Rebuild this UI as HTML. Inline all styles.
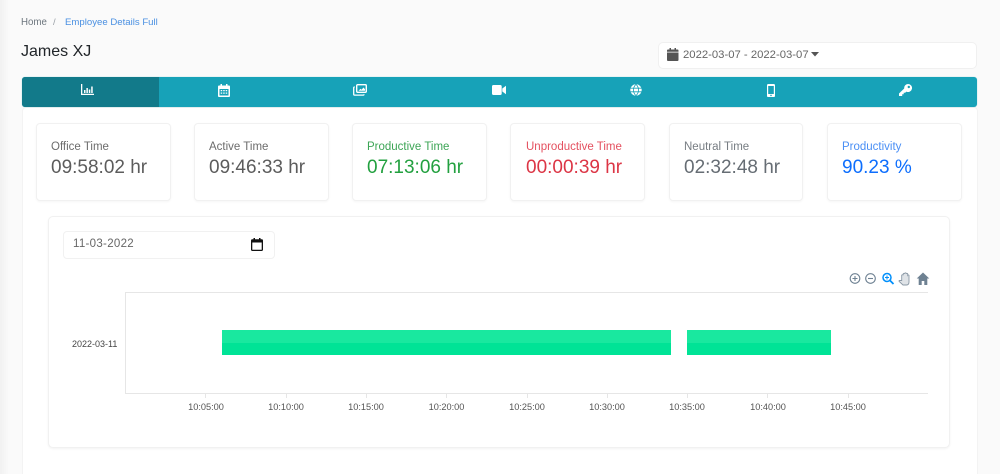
<!DOCTYPE html>
<html><head><meta charset="utf-8"><title>Employee Details</title>
<style>
*{box-sizing:border-box}
html,body{margin:0;padding:0;width:1000px;height:474px;overflow:hidden}
body{background:#fafafa;font-family:"Liberation Sans",sans-serif}
#page{position:relative;width:1000px;height:474px;overflow:hidden;background:#fafafa}
.a{position:absolute;white-space:nowrap}
#shade{left:0;top:0;width:9px;height:474px;background:linear-gradient(90deg,#f1f1f1,#fafafa)}
#panel{left:22px;top:107px;width:956px;height:367px;background:#fff;border:1px solid #f3f3f3;border-bottom:0;border-radius:4px 4px 0 0}
#nav{left:22px;top:77px;width:955px;height:30px;background:#17a2b8;border-radius:3px;overflow:hidden;box-shadow:0 0 1px #8ccfda}
#act{left:0;top:0;width:137px;height:30px;background:#127a8a}
.card{position:absolute;top:123px;height:78px;background:#fff;border:1px solid #f1f1f1;border-radius:4px;box-shadow:0 1px 2px rgba(0,0,0,.04)}
.card .l{position:absolute;left:14px;top:16px;font-size:11.5px;line-height:14px;white-space:nowrap}
.card .v{position:absolute;left:14px;top:32px;font-size:19px;line-height:24px;white-space:nowrap}
#chart{left:48px;top:216px;width:902px;height:232px;background:#fff;border:1px solid #f1f1f1;border-radius:5px;box-shadow:0 1px 2px rgba(0,0,0,.05)}
#date{left:63px;top:231px;width:212px;height:28px;background:#fff;border:1px solid #f1f1f1;border-radius:4px}
#range{left:658px;top:42px;width:319px;height:27px;background:#fff;border:1px solid #f0f0f0;border-radius:5px}
.tick{position:absolute;top:393px;width:1px;height:5px;background:#e6e6e6}
.tl{position:absolute;top:401px;width:60px;text-align:center;font-size:9.2px;line-height:12px;color:#555}
.bar{position:absolute;top:330px;height:25px;background:linear-gradient(#19e89f 0,#19e89f 52%,#00e396 52%,#00e396 100%)}
svg{position:absolute;display:block}
</style></head><body><div id="page">
<div class="a" id="shade"></div>
<div class="a" style="left:21px;top:16px;font-size:9.7px;line-height:13px;color:#6c757d">Home</div>
<div class="a" style="left:53px;top:16px;font-size:9.5px;line-height:13px;color:#9aa0a6">/</div>
<div class="a" style="left:65px;top:16px;font-size:9.6px;line-height:13px;color:#4a90e2">Employee Details Full</div>
<div class="a" style="left:21px;top:42px;font-size:16px;line-height:19px;color:#212529">James XJ</div>

<div class="a" id="range"></div>
<svg style="left:667px;top:48px" width="12" height="13" viewBox="0 0 12 13"><path fill="#555" d="M0 4.5h11.5V12a1 1 0 0 1-1 1H1a1 1 0 0 1-1-1zM1 1.500h1.500V0h1.500v1.500h3.500V0H9v1.500h1.500a1 1 0 0 1 1 1V3.700H0V2.500a1 1 0 0 1 1-1z"/></svg>
<div class="a" style="left:683px;top:48px;font-size:11.3px;line-height:14px;color:#666">2022-03-07 - 2022-03-07</div>
<svg style="left:811px;top:52px" width="8" height="5" viewBox="0 0 8 5"><path fill="#555" d="M0 0h8L4 4.500z"/></svg>

<div class="a" id="panel"></div>
<div class="a" id="nav"><div class="a" id="act"></div></div>

<svg style="left:81px;top:84px" width="13" height="12" viewBox="0 0 13 12"><path fill="#fff" d="M0 0h1.300v9.700H13V11H0zM3 6h1.500v3H3zM5.400 4h1.500v5H5.400zM7.800 5.500h1.500V9H7.800zM10.200 2.500h1.500V9h-1.500z"/></svg>
<svg style="left:218px;top:84px" width="12" height="13" viewBox="0 0 12 13"><path fill="#fff" fill-rule="evenodd" d="M2.500 0h1.500v1.500h4V0h1.500v1.500H11a1 1 0 0 1 1 1V12a1 1 0 0 1-1 1H1a1 1 0 0 1-1-1V2.500a1 1 0 0 1 1-1h1.500zM1.500 5v6.500h9V5zM2.700 6h1.500v1.300H2.700zM5.200 6h1.500v1.300H5.200zM7.700 6h1.500v1.300H7.700zM2.700 8.500h1.500v1.300H2.700zM5.200 8.500h1.500v1.300H5.200zM7.700 8.500h1.500v1.300H7.700z"/></svg>
<svg style="left:353px;top:84px" width="14" height="12" viewBox="0 0 14 12"><rect x="3.700" y=".7" width="9.600" height="7.600" rx="1" fill="none" stroke="#fff" stroke-width="1.400"/><path fill="#fff" d="M5.500 6.800l2-2 1 1 2-2.300 1.500 1.700v1.600z"/><path fill="none" stroke="#fff" stroke-width="1.300" d="M1.800 3H1.500a.8.8 0 0 0-.8.800v6.500a.8.8 0 0 0 .8.800h8.700a.8.8 0 0 0 .8-.8"/></svg>
<svg style="left:492px;top:85px" width="14" height="10" viewBox="0 0 14 10"><rect width="9.700" height="10" rx="1.500" fill="#fff"/><path fill="#fff" d="M10.300 3.500L14 .8v8.400L10.300 6.500z"/></svg>
<svg style="left:630px;top:84px" width="12" height="12" viewBox="0 0 12 12"><circle cx="6" cy="6" r="5.700" fill="#fff"/><path fill="none" stroke="#17a2b8" stroke-width=".8" d="M.5 4.200h11M.5 7.800h11M6 .3c-3.400 3.400-3.400 8 0 11.400M6 .3c3.400 3.400 3.400 8 0 11.400"/></svg>
<svg style="left:767px;top:84px" width="8" height="13" viewBox="0 0 8 13"><path fill="#fff" fill-rule="evenodd" d="M1.300 0h5.400A1.300 1.300 0 0 1 8 1.300v10.400A1.300 1.300 0 0 1 6.700 13H1.300A1.300 1.300 0 0 1 0 11.700V1.300A1.300 1.300 0 0 1 1.300 0zM1.200 2v8h5.600V2zM4 10.600a.8.800 0 1 0 0 1.600.8.800 0 0 0 0-1.600z"/></svg>
<svg style="left:899px;top:84px" width="13" height="12" viewBox="0 0 13 12"><path fill="#fff" fill-rule="evenodd" d="M9 0a4 4 0 1 1-1.700 7.600L6.200 8.700H4.700v1.500H3.200V12H0V9.500l5.200-5A4 4 0 0 1 9 0zm.8 1.800a1.200 1.200 0 1 0 0 2.400 1.200 1.200 0 0 0 0-2.400z"/></svg>

<div class="card" style="left:36px;width:135px"><div class="l" style="color:#6c6c6c">Office Time</div><div class="v" style="color:#5c5c5c">09:58:02 hr</div></div>
<div class="card" style="left:194px;width:135px"><div class="l" style="color:#6c6c6c">Active Time</div><div class="v" style="color:#5c5c5c">09:46:33 hr</div></div>
<div class="card" style="left:352px;width:135px"><div class="l" style="color:#3da556">Productive Time</div><div class="v" style="color:#22a03f">07:13:06 hr</div></div>
<div class="card" style="left:510px;width:135px"><div class="l" style="left:15px;color:#e4505f">Unproductive Time</div><div class="v" style="left:15px;color:#dc3545">00:00:39 hr</div></div>
<div class="card" style="left:669px;width:134px"><div class="l" style="color:#777d83">Neutral Time</div><div class="v" style="color:#666d74">02:32:48 hr</div></div>
<div class="card" style="left:827px;width:135px"><div class="l" style="color:#4a8ff5">Productivity</div><div class="v" style="color:#0d6efd">90.23 %</div></div>

<div class="a" id="chart"></div>
<div class="a" id="date"></div>
<div class="a" style="left:73px;top:237px;font-size:11.5px;line-height:14px;color:#666;letter-spacing:.3px">11-03-2022</div>
<svg style="left:251px;top:238px" width="12" height="13" viewBox="0 0 12 13"><path fill="#111" fill-rule="evenodd" d="M2.500 0H4v1.300h4V0h1.500v1.300h1.300A1.200 1.200 0 0 1 12 2.500v9.300A1.200 1.200 0 0 1 10.800 13H1.200A1.200 1.200 0 0 1 0 11.800V2.500a1.200 1.200 0 0 1 1.200-1.200h1.300zM1.300 4.500v7.200h9.400V4.500z"/></svg>

<svg style="left:849px;top:272px" width="82" height="14" viewBox="0 0 82 14">
<circle cx="6" cy="6.500" r="4.800" fill="none" stroke="#6e8192" stroke-width="1.100"/><path stroke="#6e8192" stroke-width="1.100" d="M3.500 6.500h5M6 4v5"/>
<circle cx="21.500" cy="6.500" r="4.800" fill="none" stroke="#6e8192" stroke-width="1.100"/><path stroke="#6e8192" stroke-width="1.100" d="M19 6.500h5"/>
<circle cx="38" cy="5.500" r="4" fill="none" stroke="#008ffb" stroke-width="1.500"/><path stroke="#008ffb" stroke-width="1.800" d="M41 8.500l3.500 3.500"/><path stroke="#008ffb" d="M36 5.500h4M38 3.500v4"/>
<path fill="#dfe3e7" stroke="#8a98a5" stroke-width=".9" d="M50.500 8.500h2.200V3.200a.8.800 0 0 1 1.500 0V1.800a.8.800 0 0 1 1.500 0V1.300a.8.800 0 0 1 1.500 0v.5a.8.800 0 0 1 1.500 0v1.500a.8.800 0 0 1 1.300 0V10c0 2-1 3-2.500 3h-3.500L50.200 9.500c-.3-.6-.2-1 .3-1z"/>
<path fill="#6e8192" d="M74 .5l6.300 6H78.300v6.500h-3V9h-2.600v4h-3V6.500H67.700z"/>
</svg>

<div class="a" style="left:125px;top:292px;width:803px;height:1px;background:#e6e6e6"></div>
<div class="a" style="left:125px;top:292px;width:1px;height:102px;background:#e6e6e6"></div>
<div class="a" style="left:125px;top:393px;width:803px;height:1px;background:#e6e6e6"></div>
<div class="bar" style="left:222px;width:449px"></div>
<div class="bar" style="left:687px;width:144px"></div>
<div class="a" style="left:72px;top:338px;font-size:9px;line-height:12px;color:#444">2022-03-11</div>

<div class="tick" style="left:205px"></div><div class="tl" style="left:176px">10:05:00</div>
<div class="tick" style="left:286px"></div><div class="tl" style="left:256px">10:10:00</div>
<div class="tick" style="left:366px"></div><div class="tl" style="left:336px">10:15:00</div>
<div class="tick" style="left:446px"></div><div class="tl" style="left:416.5px">10:20:00</div>
<div class="tick" style="left:527px"></div><div class="tl" style="left:497px">10:25:00</div>
<div class="tick" style="left:607px"></div><div class="tl" style="left:577px">10:30:00</div>
<div class="tick" style="left:687px"></div><div class="tl" style="left:657px">10:35:00</div>
<div class="tick" style="left:767px"></div><div class="tl" style="left:738px">10:40:00</div>
<div class="tick" style="left:848px"></div><div class="tl" style="left:818px">10:45:00</div>
</div></body></html>
